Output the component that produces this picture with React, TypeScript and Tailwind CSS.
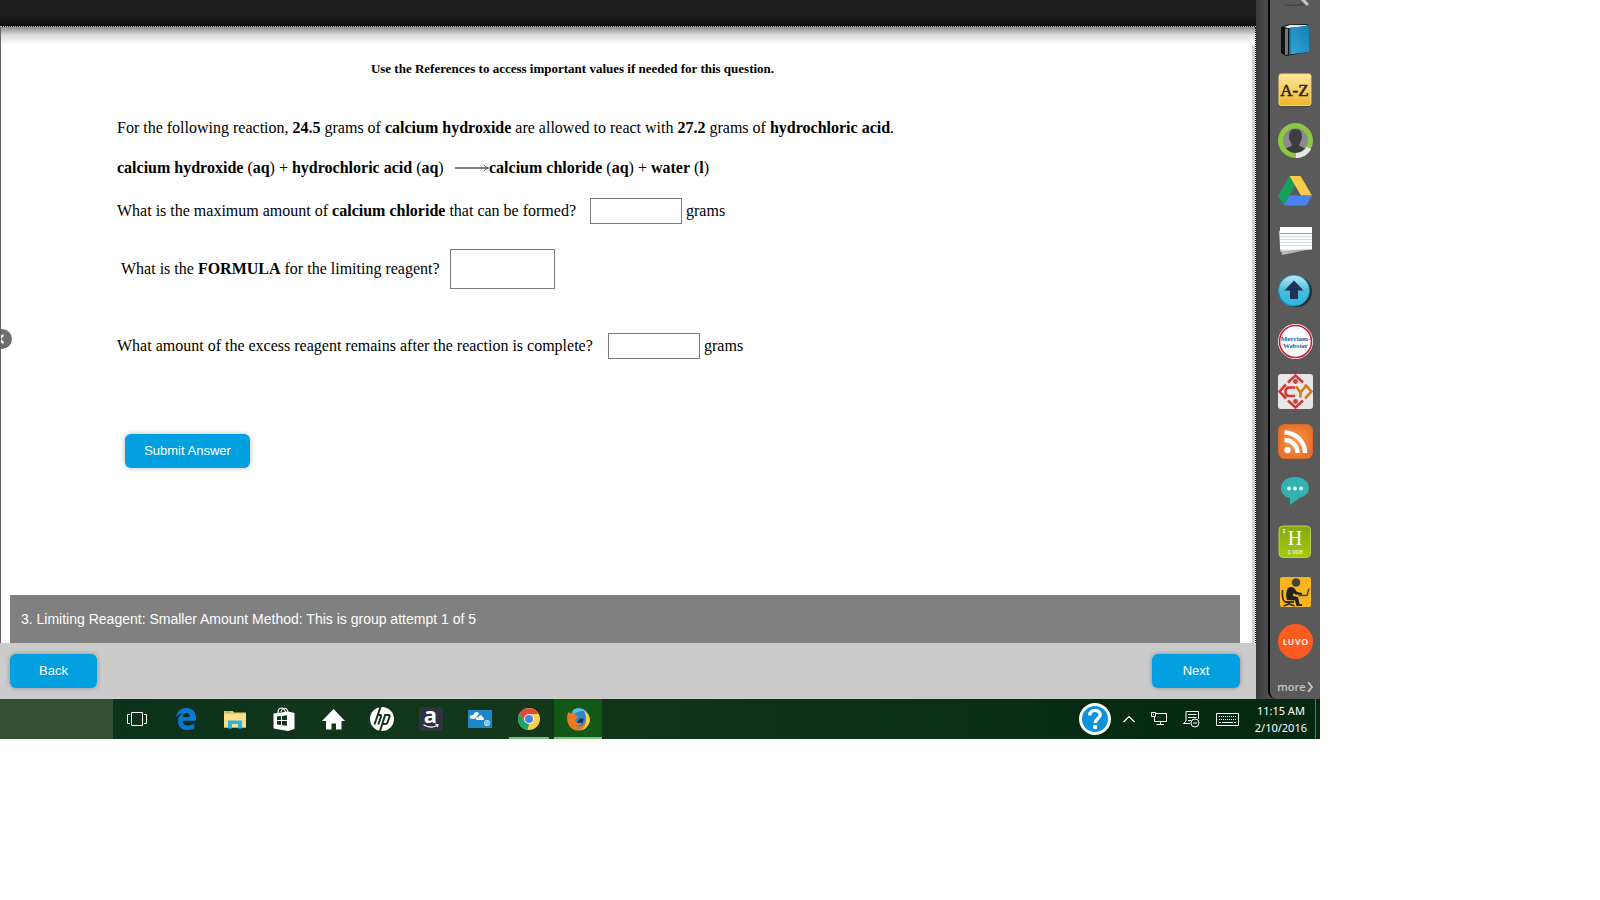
import React, { useState } from 'react';
import { ChevronLeft } from 'lucide-react';

const BookIcon = () => (
  <svg width="32" height="34" viewBox="0 0 32 34">
    <defs>
      <linearGradient id="book" x1="0" y1="1" x2="1" y2="0">
        <stop offset="0" stopColor="#35a6da" />
        <stop offset="1" stopColor="#127fb2" />
      </linearGradient>
    </defs>
    <path d="M2 4 L9 1.5 L28 1 L30 2.5 V29 L7 33 L2 30 Z" fill="#111" />
    <path d="M5 4 L11 2 H27 L29 3 L9 5 Z" fill="#e8e8e8" />
    <path d="M6 6 L9 5.5 V31.5 L6 32 Z" fill="#777" />
    <path d="M10 5 L30 2.5 V29 L10 31.5 Z" fill="url(#book)" />
    <path d="M10 5 H11.5 V31 H10 Z" fill="#0c648e" />
  </svg>
);

const DictionaryIcon = () => (
  <svg width="34" height="34" viewBox="0 0 34 34">
    <defs>
      <linearGradient id="az" x1="0" y1="0" x2="0" y2="1">
        <stop offset="0" stopColor="#ffe79a" />
        <stop offset="1" stopColor="#edb52c" />
      </linearGradient>
    </defs>
    <rect x="1.5" y="1.5" width="32" height="32" rx="2" fill="#3b3420" />
    <rect x="1" y="1" width="32" height="31.5" rx="2" fill="url(#az)" stroke="#f6d77a" />
    <text x="16.5" y="22.5" textAnchor="middle" fontSize="17" fontFamily="Liberation Serif, serif" fill="#222" stroke="#222" strokeWidth=".5">A-Z</text>
  </svg>
);

const ProfileIcon = () => (
  <svg width="35" height="35" viewBox="0 0 35 35">
    <circle cx="17.5" cy="17.5" r="14" fill="#8b8b8d" />
    <path d="M17.5 6 C22.5 6 24.3 9.5 23.8 13.5 C24.6 14 23.8 16.8 23 17.2 C22.6 19.5 21.4 21 21.2 22.2 C22.5 24 26.5 24.5 28.5 26.5 C25 31.5 10 31.5 6.5 26.5 C8.5 24.5 12.5 24 13.8 22.2 C13.6 21 12.4 19.5 12 17.2 C11.2 16.8 10.4 14 11.2 13.5 C10.7 9.5 12.5 6 17.5 6 Z" fill="#3d3d3d" />
    <circle cx="17.5" cy="17.5" r="15" fill="none" stroke="#8dc63f" strokeWidth="5" />
    <path d="M31 25 A15 15 0 0 1 18 32.5" fill="none" stroke="#e6e6e6" strokeWidth="5" />
  </svg>
);

const DriveIcon = () => (
  <svg width="34" height="30" viewBox="0 0 34 30">
    <path d="M11.5 0 L17 9.5 L6 29.5 L0 20 Z" fill="#12a05c" />
    <path d="M11.5 0 H22.5 L34 19.5 H23 Z" fill="#fdcb4a" />
    <path d="M11.5 19.5 H34 L28.5 29.5 H6 Z" fill="#4a84f0" />
  </svg>
);

const CardsIcon = () => (
  <svg width="34" height="30" viewBox="0 0 34 30">
    <path d="M1 8 L4 29 L33 23 V18 Z" fill="#bdbdbd" />
    <path d="M1 5 L2.5 26 L33 23 V5 Z" fill="#dedede" stroke="#888" strokeWidth=".5" />
    <rect x="2" y="1" width="32" height="22.5" fill="#fff" />
    <path d="M2 7.5 H34" stroke="#ee8080" />
    <path d="M2 10.5 H34 M2 13.5 H34 M2 16.5 H34 M2 19.5 H34" stroke="#bfe3f3" />
  </svg>
);

const UploadIcon = () => (
  <svg width="35" height="35" viewBox="0 0 35 35">
    <defs>
      <linearGradient id="up" x1="0" y1="0" x2="0" y2="1">
        <stop offset="0" stopColor="#c4ecf7" />
        <stop offset=".5" stopColor="#4bbcdc" />
        <stop offset="1" stopColor="#28b8e2" />
      </linearGradient>
    </defs>
    <circle cx="18.5" cy="18.5" r="15.5" fill="#262b2e" />
    <circle cx="16" cy="17.5" r="15.5" fill="url(#up)" stroke="#1698bd" />
    <path d="M16 7.5 L25.5 17.5 H20 V26 H12 V17.5 H6.5 Z" fill="#1f3158" />
  </svg>
);

const MerriamIcon = () => (
  <svg width="35" height="35" viewBox="0 0 35 35">
    <circle cx="17.5" cy="17.5" r="17.5" fill="#fff" />
    <circle cx="17.5" cy="17.5" r="16" fill="none" stroke="#d5182f" strokeWidth="1.6" />
    <g fontSize="7" fontFamily="Liberation Serif, serif" fontWeight="700" fill="#1b5da5" textAnchor="middle">
      <text x="17.5" y="17">Merriam-</text>
      <text x="17.5" y="24">Webster</text>
    </g>
  </svg>
);

const CyIcon = () => (
  <svg width="35" height="35" viewBox="0 0 35 35">
    <rect width="35" height="35" rx="3" fill="#e7e7e7" />
    <g fill="none" strokeWidth="2.6" stroke="#d33a31">
      <path d="M10 8.500 L17.500 1.500 L25 8.500 M10 26.500 L17.500 33.500 L25 26.500" />
      <path d="M8 10.500 L1.500 17.500 L8 24.500" />
      <path d="M27 10.500 L33.500 17.500 L27 24.500" stroke="#d37c1d" />
      <path d="M17 13.500 H11.500 Q7.500 13.500 7.500 18 Q7.500 22 11.500 22 H17" />
      <path d="M18 12.500 L22.500 18.500 L27.500 12.500 M22.500 18 V23.500" stroke="#d37c1d" />
    </g>
    <circle cx="17.500" cy="7.500" r="2.400" fill="#d33a31" />
    <circle cx="17.500" cy="27.500" r="2.400" fill="#d33a31" />
  </svg>
);

const RssIcon = () => (
  <svg width="35" height="35" viewBox="0 0 35 35">
    <defs>
      <radialGradient id="rss">
        <stop offset="0" stopColor="#f9a052" />
        <stop offset="1" stopColor="#e8732a" />
      </radialGradient>
    </defs>
    <rect x=".5" y=".5" width="34" height="34" rx="6" fill="url(#rss)" stroke="#d96c2a" />
    <circle cx="9.5" cy="26" r="3.2" fill="#fff" />
    <path d="M6.5 16 A13 13 0 0 1 19.5 29 M6.5 8.5 A20.5 20.5 0 0 1 27 29" fill="none" stroke="#fff" strokeWidth="4.4" />
  </svg>
);

const ChatIcon = () => (
  <svg width="30" height="30" viewBox="0 0 30 30">
    <path d="M15 1 C23 1 29 5.5 29 12 C29 17 25 20.5 19.5 22 L10 29 V22.3 C4 20.5 1 17 1 12 C1 5.5 7 1 15 1 Z" fill="#32b1b3" />
    <g fill="#e9f6f6">
      <circle cx="9" cy="12.5" r="2" />
      <circle cx="15" cy="12.5" r="2" />
      <circle cx="21" cy="12.5" r="2" />
    </g>
  </svg>
);

const HydrogenIcon = () => (
  <svg width="34" height="34" viewBox="0 0 34 34">
    <defs>
      <linearGradient id="hyd" x1="0" y1="0" x2="0" y2="1">
        <stop offset="0" stopColor="#84a714" />
        <stop offset="1" stopColor="#a5c90f" />
      </linearGradient>
    </defs>
    <rect x="1" y="1" width="31.5" height="31.5" rx="4" fill="url(#hyd)" stroke="#b7d451" />
    <g fill="#fff" textAnchor="middle">
      <text x="6" y="8" fontSize="6" fontWeight="700" fontFamily="Liberation Sans, sans-serif">1</text>
      <text x="17" y="20" fontSize="20" fontFamily="Liberation Serif, serif">H</text>
      <text x="17" y="29" fontSize="6" fontFamily="Liberation Sans, sans-serif">1.008</text>
    </g>
  </svg>
);

const DeskIcon = () => (
  <svg width="32" height="32" viewBox="0 0 32 32">
    <rect x="1" y="1" width="31" height="30" rx="2" fill="#f9b61d" />
    <circle cx="17" cy="6.5" r="4.3" fill="#444" />
    <path d="M9 12 C11 10.5 14 11 15.5 12.5 L18 16 L23 17 V19 L16.5 18.5 L14.5 17 L14 20 L19 21 L20.5 28 H23 V30 H17.5 L16 24.5 L8 24 C6.5 20 7 15 9 12 Z" fill="#222" />
    <path d="M3.5 14 C3 20 4 25 6.5 26 H15 M10 26 V28.5 M4.5 30 L10 28 L15.5 30" fill="none" stroke="#333" strokeWidth="1.8" />
    <path d="M19.5 19.5 H28 L30 12.5" fill="none" stroke="#444" strokeWidth="1.5" />
  </svg>
);

const LuvoIcon = () => (
  <svg width="35" height="35" viewBox="0 0 35 35">
    <circle cx="17.5" cy="17.5" r="17.5" fill="#fd5b21" />
    <text x="18" y="20.5" textAnchor="middle" fontSize="8" fontWeight="700" letterSpacing="1" fontFamily="Lato, sans-serif" fill="#fff">LUVO</text>
  </svg>
);

const railTools = [
  { name: 'Textbook', Icon: BookIcon },
  { name: 'Dictionary', Icon: DictionaryIcon },
  { name: 'Profile', Icon: ProfileIcon },
  { name: 'Drive', Icon: DriveIcon },
  { name: 'Flashcards', Icon: CardsIcon },
  { name: 'Upload', Icon: UploadIcon },
  { name: 'Merriam-Webster', Icon: MerriamIcon },
  { name: 'Course tools', Icon: CyIcon },
  { name: 'Feed', Icon: RssIcon },
  { name: 'Chat', Icon: ChatIcon },
  { name: 'Periodic table', Icon: HydrogenIcon },
  { name: 'Tutoring', Icon: DeskIcon },
  { name: 'Luvo', Icon: LuvoIcon },
];

const TaskViewIcon = () => (
  <svg width="20" height="14" viewBox="0 0 20 14" fill="none" stroke="#fff">
    <path d="M4.5 .5 H15.5 V13.5 H4.5 Z M3 2.5 H.5 V11.5 H3 M17 2.5 H19.5 V11.5 H17" />
  </svg>
);

const EdgeIcon = () => (
  <svg width="20" height="22" viewBox="0 0 20 22">
    <path d="M0 9.6 C.8 3.8 4.6 0 10.3 0 C16.5 0 20 4.3 20 10 V12.7 H6.3 C6.5 16 9.3 17.5 12.3 17.5 C14.6 17.5 16.7 16.9 18.4 15.8 V20.3 C16.5 21.4 14 22 11.3 22 C5.5 22 2 18.5 2 13.3 C2 9.5 4.2 6.5 7.3 5 C4.5 5.2 1.800 6.8 0 9.6 Z M6.5 9 H13.7 C13.7 6.5 12.5 5 10.2 5 C8.3 5 6.9 6.7 6.5 9 Z" fill="#0a78d6" />
  </svg>
);

const ExplorerIcon = () => (
  <svg width="22" height="19" viewBox="0 0 22 19">
    <path d="M0 1 H9 L10 2.5 H22 V17.5 H0 Z" fill="#f2c94c" />
    <path d="M0 4 H22 V17.5 H0 Z" fill="#fbe08b" />
    <path d="M2 1.5 H6 V2.5 H2 Z" fill="#4fb6a5" />
    <path d="M4 10.5 H18 V18.5 H14 V14 H8 V18.5 H4 Z" fill="#29b5e8" />
  </svg>
);

const StoreIcon = () => (
  <svg width="22" height="24" viewBox="0 0 22 24">
    <path d="M5 6 C5 -.5 11 -.5 12.5 5 M8 5 C9 0 14 0 15 5" fill="none" stroke="#fff" strokeWidth="1.2" />
    <path d="M.5 6.5 L15 4.5 L21.5 6 V22 L15 24 L.5 21.5 Z" fill="#fff" />
    <path d="M4 9.5 L8 9 V13 H4 Z M9 8.900 L14 8.300 V13 H9 Z M4 14 H8 V18 L4 17.6 Z M9 14 H14 V18.700 L9 18.200 Z" fill="#12351b" />
  </svg>
);

const HomeIcon = () => (
  <svg width="23" height="21" viewBox="0 0 23 21">
    <path d="M11.5 0 L23 12 H19.5 V20.5 H14 V14.5 H9.5 V20.5 H4 V12 H0 Z" fill="#fff" />
  </svg>
);

const HpIcon = () => (
  <svg width="24" height="24" viewBox="0 0 24 24">
    <circle cx="12" cy="12" r="12" fill="#fff" />
    <path d="M10.5 0 L4.5 17.5 M7.5 8 H10 Q11.500 8 11 9.500 L8.300 17.500 M15.500 7 L10 24 M15 8 H18.500 Q20 8 19.500 9.500 L17.500 15.500 Q17 17 15.500 17 H13" fill="none" stroke="#12351b" strokeWidth="2" />
  </svg>
);

const AmazonIcon = () => (
  <svg width="24" height="24" viewBox="0 0 24 24" className="overflow-visible">
    <rect width="24" height="24" rx="1.5" fill="#2d333f" />
    <text x="11.5" y="16" textAnchor="middle" fontSize="22" fontWeight="700" fontFamily="Open Sans, sans-serif" fill="#fff">a</text>
    <path d="M4.5 17.8 Q11.5 22 18 18.5 M16.5 17.3 L19 17.5 L18.3 20" fill="none" stroke="#fff" strokeWidth="1.2" />
  </svg>
);

const CloudIcon = () => (
  <svg width="24" height="18" viewBox="0 0 24 18">
    <rect width="24" height="18" fill="#1c87c9" />
    <path d="M2 8.5 C1 5.5 4 4.5 5.5 5 C6 1.5 10 1 11 4 L9 6 L7 9 Z" fill="#fff" />
    <path d="M8 9.5 C7.5 7 9.5 6.5 10.5 7 C11.5 4 15 5 14.5 7.5 C16.5 7.5 16.5 10 15 10 H9 Z" fill="#fff" />
    <circle cx="19" cy="13" r="3" fill="#b8dcf0" />
    <path d="M18.5 11 L17.5 14 M20.5 12 L19.5 15" stroke="#1c87c9" strokeWidth=".7" />
  </svg>
);

const ChromeIcon = () => (
  <svg width="22" height="22" viewBox="0 0 22 22">
    <circle cx="11" cy="11" r="11" fill="#fcd04b" />
    <path d="M1.5 5.5 A11 11 0 0 1 20.6 6 H11 L6.5 13.5 Z" fill="#dc4b3e" />
    <path d="M1.5 5.5 L6.5 13.5 L11 16 L9.5 21.9 A11 11 0 0 1 1.5 5.5 Z" fill="#1ca261" />
    <circle cx="11" cy="11" r="5" fill="#f4f4f4" />
    <circle cx="11" cy="11" r="4" fill="#4a86e8" />
  </svg>
);

const FirefoxIcon = () => (
  <svg width="23" height="23" viewBox="0 0 23 23">
    <circle cx="12" cy="11" r="10.5" fill="#2b86cc" />
    <path d="M6 2 C10 -1 17 0 20 4 C16 2 10 3 6 7 Z" fill="#5dbde9" />
    <path d="M13 10 L17 11 L15.500 15 L10 15 Z" fill="#17335f" />
    <path d="M1.5 4 L4 6 C5.5 4.5 7.5 4.5 9 5 C7.5 6.5 8 8 11 8.5 C10.5 10.5 8.5 10.5 8 12 C8.5 15 12 16 14.5 14.5 C13.5 18 9.5 18.5 7 17 C12 21 19.5 17.5 18.5 9 C19 6 18 4.5 17 3 C22 5.5 23.5 10 22.5 14 C20.5 21 13.5 24 7.5 22 C0 19 -1.5 10 1.5 4 Z" fill="#ec7a22" />
    <path d="M17 3 C22 5.5 23.5 10 22.5 14 C21 19 17.5 21.5 14 22.3 C19.5 18.5 21 10 17 3 Z" fill="#fbd13f" />
  </svg>
);

const taskbarApps = [
  { name: 'Task View', Icon: TaskViewIcon },
  { name: 'Edge', Icon: EdgeIcon },
  { name: 'File Explorer', Icon: ExplorerIcon },
  { name: 'Store', Icon: StoreIcon },
  { name: 'Home', Icon: HomeIcon },
  { name: 'HP', Icon: HpIcon },
  { name: 'Amazon', Icon: AmazonIcon },
  { name: 'Cloud', Icon: CloudIcon },
  { name: 'Chrome', Icon: ChromeIcon, open: true },
  { name: 'Firefox', Icon: FirefoxIcon, open: true, active: true },
];

const HelpIcon = () => (
  <svg width="32" height="32" viewBox="0 0 32 32">
    <circle cx="16" cy="16" r="14.5" fill="#0a93d8" stroke="#fff" strokeWidth="3" />
    <path d="M10.8 12.5 C10.8 5.5 21.5 6 21.2 12 C21 15.5 16.3 15.8 16.3 20" fill="none" stroke="#fff" strokeWidth="3.4" />
    <circle cx="16.2" cy="24" r="2.2" fill="#fff" />
  </svg>
);

const CaretIcon = () => (
  <svg width="12" height="8" viewBox="0 0 12 8">
    <path d="M.5 7 L6 1.5 L11.5 7" fill="none" stroke="#fff" strokeWidth="1.2" />
  </svg>
);

const NetworkIcon = () => (
  <svg width="16" height="14" viewBox="0 0 16 14" fill="none" stroke="#fff">
    <path d="M5 1.5 H15.5 V9.5 H3.5 V5 M.5 .5 H4.5 V4.5 H.5 Z M9.5 9.5 V12.5 M5.5 12.5 H13 M2 2.5 H3" />
  </svg>
);

const NotificationIcon = () => (
  <svg width="17" height="17" viewBox="0 0 17 17" fill="none" stroke="#fff">
    <path d="M7 12.5 H.5 L3 10 V.5 H15.5 V8 M5 3.5 H13.5 M5 6.5 H13.5 M5 9.5 H8" />
    <circle cx="12" cy="12" r="4" />
    <path d="M10 12 H14" />
  </svg>
);

const KeyboardIcon = () => (
  <svg width="23" height="13" viewBox="0 0 23 13" fill="none" stroke="#fff">
    <path d="M.5 .5 H22.5 V12.5 H.5 Z" />
    <path d="M3 3.5 H20 M3 6.5 H20" strokeDasharray="1 1" />
    <path d="M3 9.5 H5 M6 9.5 H17 M18 9.5 H20" />
  </svg>
);

const buttonClass =
  'h-[34px] rounded-md bg-[#00a0e1] font-[Liberation_Sans,Arial,sans-serif] text-[13px] text-white shadow-[0_0_5px_rgba(0,0,0,0.3)]';
const inputClass = 'border border-[#7b7b7b] bg-white px-1 outline-none';

const Question = () => {
  const [answers, setAnswers] = useState({ mass: '', formula: '', excess: '' });

  const update = (key: string) => (e: React.ChangeEvent<HTMLInputElement>) =>
    setAnswers({ ...answers, [key]: e.target.value });

  return (
    <form
      onSubmit={(e) => e.preventDefault()}
      className="pt-[34px] pr-[224px] pl-[116px] font-[Liberation_Serif,Times_New_Roman,serif] text-base leading-5 text-black"
    >
      <p className="text-center text-[13px] leading-4 font-bold">
        Use the References to access important values if needed for this question.
      </p>
      <p className="mt-[41px]">
        For the following reaction, <b>24.5</b> grams of <b>calcium hydroxide</b> are allowed to react with{' '}
        <b>27.2</b> grams of <b>hydrochloric acid</b>.
      </p>
      <p className="mt-5 flex items-center gap-1">
        <span className="w-[334px]">
          <b>calcium hydroxide</b> (<b>aq</b>) + <b>hydrochloric acid</b> (<b>aq</b>)
        </span>
        <span className="flex items-center">
          <svg width="34" height="8" viewBox="0 0 34 8" fill="none" stroke="#555">
            <path d="M0 4 H33" strokeWidth="1.5" />
            <path d="M29 1 Q30.5 3.5 33.5 4 Q30.5 4.5 29 7" />
          </svg>
          <span>
            <b>calcium chloride</b> (<b>aq</b>) + <b>water</b> (<b>l</b>)
          </span>
        </span>
      </p>
      <label className="mt-5 flex items-center gap-1">
        <span className="w-[469px]">
          What is the maximum amount of <b>calcium chloride</b> that can be formed?
        </span>
        <input type="text" value={answers.mass} onChange={update('mass')} className={`${inputClass} h-[26px] w-[92px]`} />
        <span>grams</span>
      </label>
      <label className="mt-[25px] ml-1 flex items-center gap-1">
        <span className="w-[325px]">
          What is the <b>FORMULA</b> for the limiting reagent?
        </span>
        <input type="text" value={answers.formula} onChange={update('formula')} className={`${inputClass} h-10 w-[105px]`} />
      </label>
      <label className="mt-11 flex items-center gap-1">
        <span className="w-[487px]">What amount of the excess reagent remains after the reaction is complete?</span>
        <input type="text" value={answers.excess} onChange={update('excess')} className={`${inputClass} h-[26px] w-[92px]`} />
        <span>grams</span>
      </label>
      <button type="submit" className={`${buttonClass} mt-[75px] ml-2 w-[125px]`}>
        Submit Answer
      </button>
    </form>
  );
};

const ToolRail = () => (
  <aside className="w-16 shrink-0 bg-linear-to-r from-[#3b3b3b] to-[#505050] to-20% pl-3">
    <div className="flex h-full flex-col items-center rounded-bl-lg border-l-2 border-black bg-[#5a5a5a]">
      <svg width="30" height="6" viewBox="0 0 30 6" className="mb-[9px]">
        <path d="M0 3 Q10 6 22 3 L24 6 H8 Z" fill="#444" />
        <path d="M20 -3 L27 4" stroke="#c9c9c9" strokeWidth="3" strokeLinecap="round" />
      </svg>
      <ul className="flex w-full flex-1 flex-col">
        {railTools.map(({ name, Icon }) => (
          <li key={name} className="flex flex-1">
            <button type="button" aria-label={name} className="flex flex-1 items-center justify-center">
              <Icon />
            </button>
          </li>
        ))}
      </ul>
      <button
        type="button"
        className="mt-3 mb-1 flex items-center gap-px font-[Open_Sans,sans-serif] text-[11px] leading-4 font-semibold text-[#c4c4c4]"
      >
        more
        <svg width="6" height="10" viewBox="0 0 6 10">
          <path d="M1 0 L5 5 L1 10" fill="none" stroke="#c4c4c4" strokeWidth="2" />
        </svg>
      </button>
    </div>
  </aside>
);

const Taskbar = () => (
  <footer className="flex h-10 bg-linear-to-r from-[#08321c] via-[#14371a] via-40% to-[#042810] text-white">
    <div className="w-[113px] bg-[#345032]" />
    <nav className="flex gap-px">
      {taskbarApps.map(({ name, Icon, open, active }) => (
        <button
          key={name}
          type="button"
          aria-label={name}
          className={`flex w-12 flex-col items-center ${active ? 'bg-[#125816]' : ''}`}
        >
          <span className="flex flex-1 items-center">
            <Icon />
          </span>
          {open && <span className={`-mt-0.5 h-0.5 bg-[#78c27a] ${active ? 'w-12' : 'w-10'}`} />}
        </button>
      ))}
    </nav>
    <div className="ml-auto flex items-center">
      <HelpIcon />
      <div className="ml-3 flex items-center gap-4">
        <CaretIcon />
        <NetworkIcon />
        <NotificationIcon />
        <KeyboardIcon />
      </div>
      <div className="ml-4 text-center font-[Noto_Sans,sans-serif] text-[11px] leading-[17px]">
        <p>11:15 AM</p>
        <p>2/10/2016</p>
      </div>
      <div className="mr-1 ml-2 h-10 w-px bg-[#5d7a63]" />
    </div>
  </footer>
);

const App: React.FC = () => {
  return (
    <div className="min-h-screen bg-white">
      <div className="mr-[280px]">
        <div className="flex">
          <div className="min-w-0 flex-1">
            <header className="h-[27px] border-b border-dotted border-[#bbb] bg-linear-to-b from-[#1e1e1e] from-60% to-[#0c0c0c]" />
            <main className="relative flex border-l border-[#666] bg-linear-to-b from-[#8c8c8c] via-[#dcdcdc] via-[8px] to-white to-[18px]">
              <div className="min-w-0 flex-1">
                <Question />
                <p className="mt-[127px] mr-3 ml-[9px] bg-[#808080] px-[11px] py-3.5 font-[Liberation_Sans,Arial,sans-serif] text-sm leading-5 text-white">
                  3. Limiting Reagent: Smaller Amount Method: This is group attempt 1 of 5
                </p>
              </div>
              <div className="mt-[18px] w-[3px] bg-[#d2d2d2]" />
              <div className="border-l border-dotted border-black" />
              <button
                type="button"
                aria-label="Collapse"
                className="absolute top-[302px] left-0 flex h-5 w-[11px] items-center justify-end overflow-hidden rounded-r-full bg-[#6e6e6e] pr-1 text-white"
              >
                <ChevronLeft size={14} strokeWidth={4} className="shrink-0" />
              </button>
            </main>
            <div className="flex justify-between bg-[#cbcbcb] pt-[11px] pr-4 pb-[11px] pl-2.5">
              <button type="button" className={`${buttonClass} w-[87px]`}>
                Back
              </button>
              <button type="button" className={`${buttonClass} w-[88px]`}>
                Next
              </button>
            </div>
          </div>
          <ToolRail />
        </div>
        <Taskbar />
      </div>
    </div>
  );
};

export default App;
